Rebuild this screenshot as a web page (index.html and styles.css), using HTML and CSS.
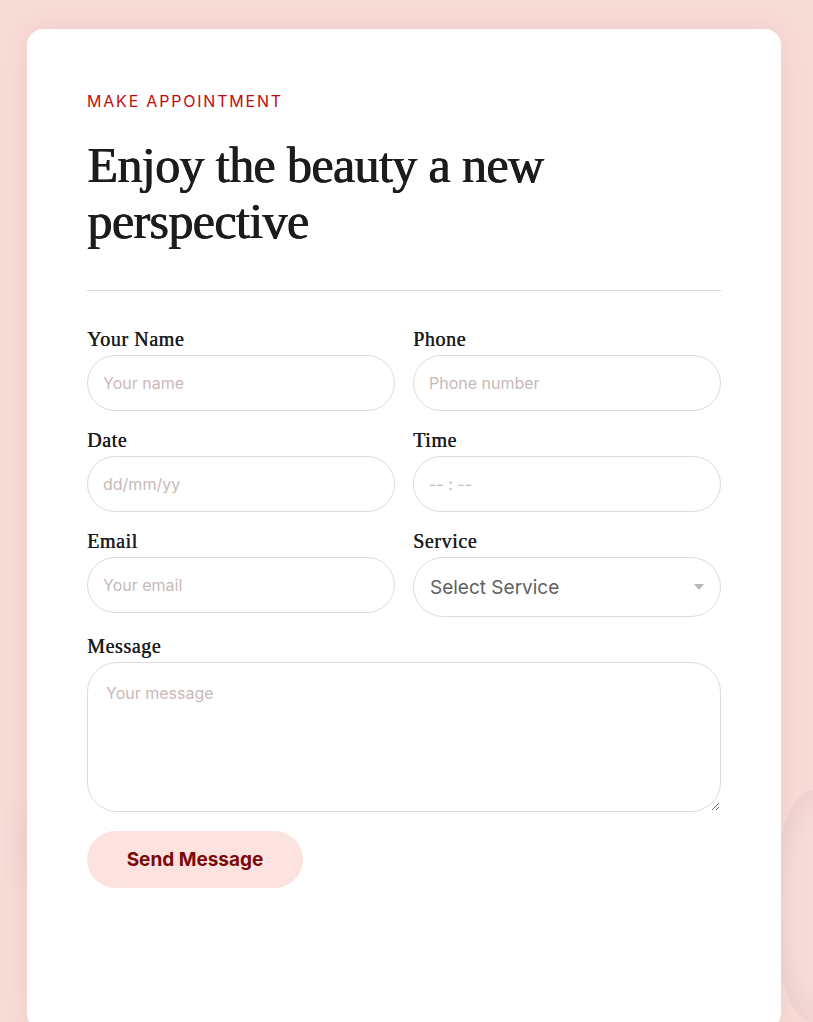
FILE: index.html
```html
<!DOCTYPE html>
<html lang="en">
<head>
<meta charset="utf-8">
<title>Make Appointment</title>
<link rel="stylesheet" href="styles.css">
</head>
<body>
<div class="bg-deco deco-a"></div>
<div class="bg-deco deco-b"></div>
<main class="card">
  <p class="eyebrow">MAKE APPOINTMENT</p>
  <h1 class="title">Enjoy the beauty a new<br>perspective</h1>
  <hr class="divider">
  <form class="form">
    <div class="grid">
      <label class="field"><span class="label">Your Name</span><input class="input" type="text" placeholder="Your name"></label>
      <label class="field"><span class="label">Phone</span><input class="input" type="text" placeholder="Phone number"></label>
      <label class="field"><span class="label">Date</span><input class="input" type="text" placeholder="dd/mm/yy"></label>
      <label class="field"><span class="label">Time</span><input class="input" type="text" placeholder="-- : --"></label>
      <label class="field"><span class="label">Email</span><input class="input" type="text" placeholder="Your email"></label>
      <label class="field"><span class="label">Service</span>
        <span class="select-wrap"><select class="select"><option>Select Service</option></select></span>
      </label>
    </div>
    <label class="field msg"><span class="label">Message</span><textarea class="textarea" placeholder="Your message"></textarea></label>
    <button class="btn" type="button">Send Message</button>
  </form>
</main>
</body>
</html>
```
FILE: styles.css
```css
html, body {
  margin: 0;
  padding: 0;
  overflow: hidden;
}
body {
  background: #f8dcd8;
  height: 1022px;
  position: relative;
}
.bg-deco {
  position: absolute;
  pointer-events: none;
}
.deco-a {
  right: 0;
  top: 790px;
  width: 40px;
  height: 232px;
  border-radius: 100% 0 0 100% / 50% 0 0 50%;
  background: radial-gradient(ellipse at 100% 50%, #f6dcd8 45%, #eed3d1 75%, #f6dad7 100%);
}
.deco-b {
  left: 0;
  top: 790px;
  width: 27px;
  height: 110px;
  background: radial-gradient(ellipse at 100% 50%, #f3d6d3 0%, #f8dcd8 80%);
}
.card {
  position: relative;
  box-sizing: border-box;
  width: 754px;
  margin: 29px 0 0 27px;
  height: 1000px;
  background: #fff;
  border-radius: 16px;
  padding: 62px 60px 60px;
  box-shadow: 0 0 30px rgba(214, 150, 145, 0.25);
}
.eyebrow {
  margin: 0;
  font-family: "Inter", "Liberation Sans", sans-serif;
  font-size: 16px;
  line-height: 20px;
  letter-spacing: 1.8px;
  color: #c00d0d;
}
.title {
  margin: 26px 0 0;
  font-family: "Liberation Serif", serif;
  font-weight: 400;
  font-size: 50px;
  line-height: 56px;
  color: #1c1c1e;
  letter-spacing: -0.6px;
  text-shadow: 1px 0 0 #1c1c1e, 0.5px 0.4px 0 #1c1c1e;
}
.divider {
  border: 0;
  border-top: 1px solid #d9d9d9;
  margin: 41px 0 0;
}
.form {
  margin-top: 36px;
}
.grid {
  display: grid;
  grid-template-columns: 1fr 1fr;
  column-gap: 18px;
  row-gap: 17px;
}
.field {
  display: flex;
  flex-direction: column;
}
.label {
  font-family: "Liberation Serif", serif;
  font-weight: 400;
  font-size: 20px;
  line-height: 25px;
  margin-bottom: 3px;
  letter-spacing: 0.6px;
  color: #1c1c1e;
  text-shadow: 0.4px 0 0 #1c1c1e;
}
.input, .select, .textarea {
  box-sizing: border-box;
  width: 100%;
  border: 1px solid #dcdcdc;
  background: #fff;
  font-family: "Inter", "Liberation Sans", sans-serif;
  outline: none;
}
.input {
  height: 56px;
  border-radius: 28px;
  padding: 0 15px;
  font-size: 16px;
  color: #333;
}
.input::placeholder, .textarea::placeholder {
  color: #c8b9b9;
}
.select-wrap {
  position: relative;
  display: block;
}
.select-wrap::after {
  content: "";
  position: absolute;
  right: 17px;
  top: 27px;
  border-left: 5px solid transparent;
  border-right: 5px solid transparent;
  border-top: 6px solid #b8b8b8;
}
.select {
  height: 60px;
  border-radius: 30px;
  padding: 0 16px;
  font-size: 19px;
  color: #5f5f5f;
  appearance: none;
  -webkit-appearance: none;
}
.msg {
  margin-top: 17px;
}
.textarea {
  height: 150px;
  border-radius: 30px;
  padding: 20px 18px;
  font-size: 16px;
  resize: vertical;
}
.btn {
  display: block;
  margin-top: 19px;
  width: 216px;
  height: 57px;
  border: 0;
  border-radius: 29px;
  background: #fde3e0;
  color: #7a0a0a;
  font-family: "Inter", "Liberation Sans", sans-serif;
  font-weight: 700;
  font-size: 19px;
  cursor: pointer;
}
```
